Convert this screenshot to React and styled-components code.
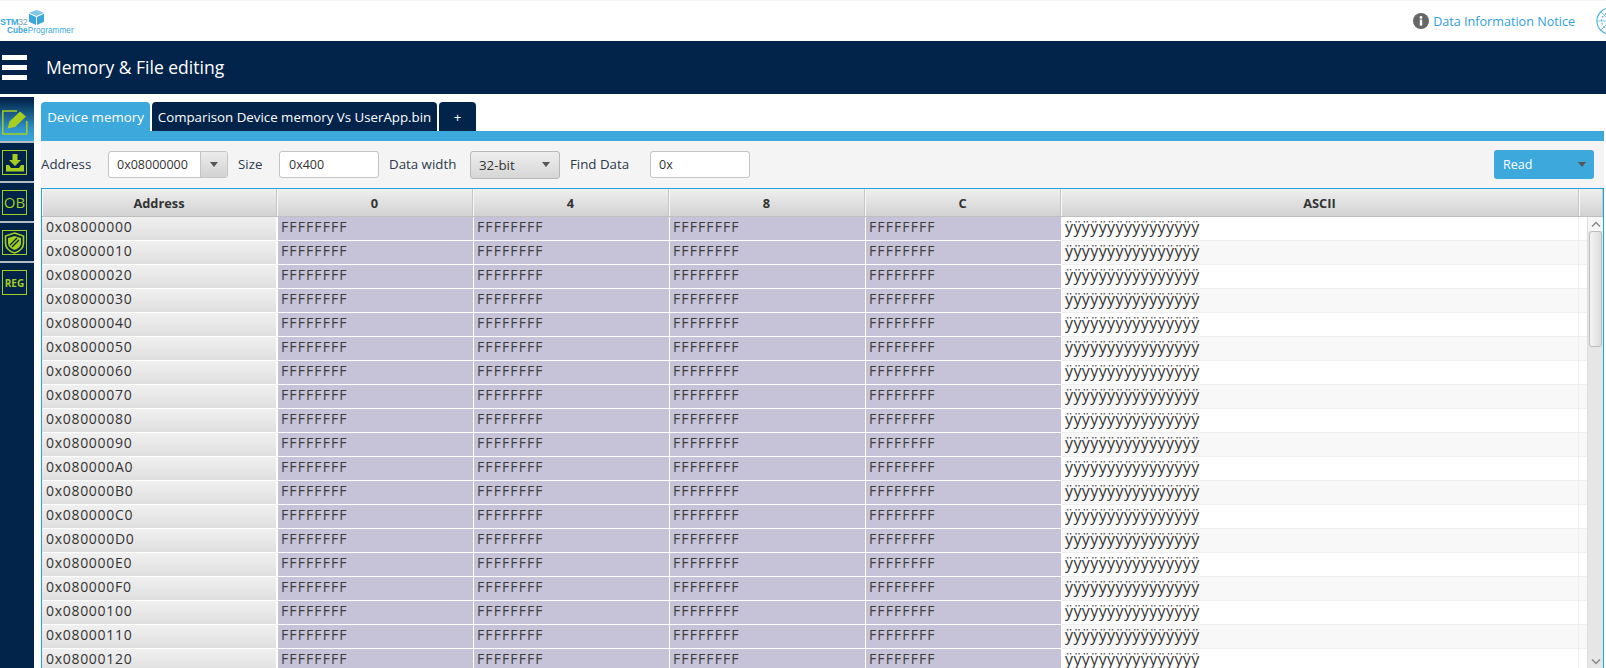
import React from "react";
import styled, { createGlobalStyle } from "styled-components";

const Global = createGlobalStyle`
  html, body { margin: 0; padding: 0; height: 668px; overflow: hidden; background: #fff; }
  body { font-family: "Open Sans", "Noto Sans", sans-serif; font-size: 13px; color: #333; }
`;

const Page = styled.div`
  width: 1606px; height: 668px; overflow: hidden; display: flex; flex-direction: column;
  border-top: 1px solid #f4f4f9; box-sizing: border-box;
`;
const TopBar = styled.header`
  height: 40px; flex: none; display: flex; align-items: center; background: #fff;
`;
const Logo = styled.div`
  width: 90px; height: 40px; flex: none; display: flex; flex-direction: column; position: relative;
  padding: 16px 0 0 0; box-sizing: border-box; line-height: 10px; font-family: "Liberation Sans", sans-serif; color: #3ba7dd;
`;
const LogoLine = styled.div`
  font-size: ${p => p.$size}px; padding-left: ${p => p.$left}px; white-space: nowrap; height: 9px; letter-spacing: ${p => p.$track || 0}px;
  b { font-weight: 700; }
  span { color: #7d9fb5; }
`;
const LogoCube = styled.svg`
  position: absolute; left: 29px; top: 9px;
`;
const Notice = styled.div`
  margin-left: auto; display: flex; align-items: center; gap: 4px; color: #2fa0dc; font-size: 12.6px;
`;
const Globe = styled.svg`
  flex: none; margin-left: 21px; margin-right: -18px;
`;
const NavBar = styled.div`
  height: 53px; flex: none; background: #02234a; display: flex; align-items: center; color: #fff;
`;
const Burger = styled.div`
  width: 25px; margin-left: 2px; display: flex; flex-direction: column; gap: 5px;
  i { display: block; height: 5px; background: #fff; }
`;
const Title = styled.div`
  margin-left: 19px; font-size: 17.5px; line-height: 24px; margin-top: -2px;
`;
const Body = styled.div`
  flex: 1; min-height: 0; display: flex; padding-top: 3px;
`;
const Side = styled.aside`
  width: 34px; flex: none; background: #02234a; display: flex; flex-direction: column;
`;
const SideItem = styled.div`
  height: ${p => p.$active ? 46 : 40}px; box-sizing: border-box; display: flex; align-items: flex-start; padding: ${p => p.$active ? 13 : 7}px 0 0 2px;
  border-bottom: ${p => p.$last ? "0" : "2px solid #b4bcc8"};
  background: ${p => p.$active ? "linear-gradient(#02234a 5%, #2f8fc4 70%, #3ca8dc)" : "transparent"};
`;
const SideBox = styled.div`
  width: 25px; height: 25px; box-sizing: border-box; border: 1px solid #a6ce1e;
  display: flex; align-items: center; justify-content: center; color: #a6ce1e; font-size: ${p => p.$size || 16}px; font-weight: ${p => p.$bold ? 700 : 400};
  line-height: 1;
`;
const Main = styled.main`
  flex: 1; min-width: 0; padding: 5px 2px 0 7px; display: flex; flex-direction: column;
`;
const Tabs = styled.div`
  display: flex; gap: 2px; height: 29px; flex: none;
`;
const Tab = styled.div`
  height: 29px; width: ${p => p.$w}px; box-sizing: border-box; display: flex; align-items: center; justify-content: center;
  background: ${p => p.$active ? "#3ca8dc" : "#02234a"}; color: #fff; border-radius: 4px 4px 0 0; font-size: 13.3px; white-space: nowrap;
`;
const TabBar = styled.div`
  height: 10px; background: #3ca8dc; flex: none;
`;
const Toolbar = styled.div`
  height: 47px; flex: none; background: #f4f4f4; display: flex; align-items: center; color: #2b3a4c;
`;
const Label = styled.span`
  font-size: 13.3px; margin-left: ${p => p.$left || 0}px; margin-top: -2px; white-space: nowrap; width: ${p => p.$w}px; flex: none;
`;
const Field = styled.div`
  height: 27px; width: ${p => p.$w}px; box-sizing: border-box; flex: none; background: #fff; border: 1px solid #c4c4c4; border-radius: 3px;
  padding-left: ${p => p.$pad || 8}px; display: flex; align-items: center; font-size: 12.5px; color: #333;
`;
const ComboArrow = styled.div`
  margin-left: auto; width: 26px; height: 100%; flex: none; background: linear-gradient(#ececec, #d2d2d2); border-left: 1px solid #c4c4c4;
  border-radius: 0 2px 2px 0; display: flex; align-items: center; justify-content: center;
`;
const Tri = styled.i`
  display: block; width: 0; height: 0; border-left: 4.5px solid transparent; border-right: 4.5px solid transparent; border-top: 5px solid #555;
`;
const Select = styled.div`
  height: 28px; width: 90px; box-sizing: border-box; flex: none; border: 1px solid #b8b8b8; border-radius: 3px;
  background: linear-gradient(#eee, #d6d6d6); display: flex; align-items: center; justify-content: space-between; padding: 0 9px 0 8px; font-size: 13.3px; color: #333;
`;
const ReadBtn = styled.div`
  margin-left: auto; margin-right: 10px; height: 29px; width: 100px; box-sizing: border-box; background: #3ca8dc; color: #fff; border-radius: 3px; display: flex;
  align-items: center; justify-content: space-between; padding: 0 8px 0 9px; font-size: 12.5px;
`;
const Table = styled.div`
  flex: 1; min-height: 0; border: 1px solid #1ea5dc; border-bottom: 0; display: flex; flex-direction: column; overflow: hidden; background: #fff;
`;
const Head = styled.div`
  display: grid; grid-template-columns: 235px 196px 196px 196px 196px 518px 1fr; height: 27px; flex: none; border-bottom: 1px solid #bfbfbf;
`;
const HeadCell = styled.div`
  background: linear-gradient(#efefef, #d2d2d2); border-right: 1px solid #c6c6c6; display: flex; align-items: center; justify-content: center; box-shadow: inset 1px 0 0 #f8f8f8;
  font-weight: 700; font-size: 12.8px; color: #333; padding-top: 1px;
`;
const Rows = styled.div`
  flex: 1; min-height: 0; display: flex;
`;
const RowList = styled.div`
  flex: 1; min-width: 0; overflow: hidden;
`;
const Row = styled.div`
  display: grid; grid-template-columns: 235px 196px 196px 196px 196px 518px 1fr; height: 24px; box-sizing: border-box; padding-bottom: 2px; background: #fff;
`;
const AddrCell = styled.div`
  background: linear-gradient(#f0f0f0, #dfdfdf); margin: 0 1px 0 0; padding: 0 0 4px 4px; display: flex; align-items: center; font-size: 14px; color: #333; letter-spacing: .7px;
`;
const DataCell = styled.div`
  background: #c6c3d8; margin-left: 1px; padding: 0 0 4px 3px; display: flex; align-items: center; font-size: 14px; color: #3b3b3b; letter-spacing: 1.1px;
`;
const AsciiCell = styled.div`
  background: ${p => p.$alt ? "#f8f8f8" : "#fff"}; box-shadow: 0 2px 0 #efefef; margin-left: 1px; padding: 0 0 4px 3px; display: flex; align-items: center; font-size: 16px; letter-spacing: .4px; color: #333; border-right: 1px solid #f0f0f0; overflow: hidden; white-space: nowrap;
`;
const Tail = styled.div`
  background: ${p => p.$alt ? "#f8f8f8" : "#fff"}; box-shadow: 0 2px 0 #efefef;
`;
const Scroll = styled.div`
  width: 16px; flex: none; background: #e6e6e6; border-left: 1px solid #ddd; box-sizing: border-box; display: flex; flex-direction: column; align-items: center;
`;
const ScrollTop = styled.div`
  height: 14px; width: 100%; background: #f6f6f6; display: flex; align-items: center; justify-content: center;
`;
const Thumb = styled.div`
  width: 13px; height: 116px; box-sizing: border-box; background: linear-gradient(90deg, #f4f4f4, #dcdcdc); border: 1px solid #bcbcbc; border-radius: 3px; flex: none;
`;
const ScrollBottom = styled.div`
  margin-top: auto; height: 12px; display: flex; align-items: center; justify-content: center;
`;

const Chevron = ({ up }) => (
  <svg width="10" height="6" viewBox="0 0 10 6" fill="none" stroke="#8a8a8a" strokeWidth="1.5">
    <path d={up ? "M1 5.5 5 1.5 9 5.5" : "M1 .5 5 4.5 9 .5"} />
  </svg>
);

const ADDRS = ["00", "10", "20", "30", "40", "50", "60", "70", "80", "90", "A0", "B0", "C0", "D0", "E0", "F0", "100", "110", "120"];
const addr = s => "0x08000" + s.padStart(3, "0");

export default function App() {
  return (
    <Page>
      <Global />
      <TopBar>
        <Logo>
          <LogoCube width="15" height="15" viewBox="0 0 16 16">
            <path d="M8 0 16 3 8 6.5 0 3Z" fill="#7fc6ea" />
            <path d="M0 4 7.500 7.500V16L0 12.500Z" fill="#3ba7dd" />
            <path d="M16 4 8.500 7.500V16L16 12.500Z" fill="#3ba7dd" />
          </LogoCube>
          <LogoLine $size={9} $left={0} $track={-0.3}><b>STM</b><span>32</span></LogoLine>
          <LogoLine $size={8.2} $left={7} $track={0.05}><b>Cube</b>Programmer</LogoLine>
        </Logo>
        <Notice>
          <svg width="16" height="16" viewBox="0 0 16 16">
            <circle cx="8" cy="8" r="8" fill="#666" />
            <rect x="6.800" y="6.600" width="2.400" height="6" fill="#fff" />
            <circle cx="8" cy="4.400" r="1.400" fill="#fff" />
          </svg>
          Data Information Notice
        </Notice>
        <Globe width="28" height="28" viewBox="0 0 30 30" fill="none" stroke="#4fb2e2" strokeWidth="1.200">
          <circle cx="15" cy="15" r="14" />
          <circle cx="15" cy="15" r="9" strokeDasharray="2 2" />
          <path d="M1 15h28M15 1v28M5 5l20 20M25 5 5 25" strokeWidth=".8" />
        </Globe>
      </TopBar>
      <NavBar>
        <Burger><i /><i /><i /></Burger>
        <Title>Memory &amp; File editing</Title>
      </NavBar>
      <Body>
        <Side>
          <SideItem $active>
            <svg width="26" height="25" viewBox="0 0 26 25" fill="none">
              <path d="M15 1H.800v23h24V11" stroke="#a6ce1e" strokeWidth="1.500" />
              <path d="M5.500 18.500 7.500 11.500 18 1.500 24 6.500 13 17Z" fill="#a6ce1e" />
            </svg>
          </SideItem>
          <SideItem>
            <SideBox>
              <svg width="20" height="20" viewBox="0 0 20 20" fill="#a6ce1e">
                <path d="M7.500 1h5v6H16l-6 6-6-6h3.500z" />
                <path d="M1 12h3l2 3h8l2-3h3v6.500H1z" />
              </svg>
            </SideBox>
          </SideItem>
          <SideItem>
            <SideBox $size={15}>OB</SideBox>
          </SideItem>
          <SideItem>
            <SideBox>
              <svg width="21" height="22" viewBox="0 0 21 22">
                <path d="M10.500 1 19.500 4V11C19.500 16 15 19.500 10.500 21 6 19.500 1.500 16 1.500 11V4Z" fill="none" stroke="#a6ce1e" strokeWidth="1.600" />
                <path d="M10.500 4 17 6V11C17 14.500 13.500 17 10.500 18 7.500 17 4 14.500 4 11V6Z" fill="#a6ce1e" />
                <path d="M6 13 13 6M8 15 15 8" stroke="#02234a" strokeWidth="1.300" />
              </svg>
            </SideBox>
          </SideItem>
          <SideItem $last>
            <SideBox $size={10} $bold>REG</SideBox>
          </SideItem>
        </Side>
        <Main>
          <Tabs>
            <Tab $active $w={109}>Device memory</Tab>
            <Tab $w={285}>Comparison Device memory Vs UserApp.bin</Tab>
            <Tab $w={37}>+</Tab>
          </Tabs>
          <TabBar />
          <Toolbar>
            <Label $w={67}>Address</Label>
            <Field $w={120}>0x08000000<ComboArrow><Tri /></ComboArrow></Field>
            <Label $left={10} $w={41}>Size</Label>
            <Field $w={100} $pad={9}>0x400</Field>
            <Label $left={10} $w={81}>Data width</Label>
            <Select>32-bit<Tri /></Select>
            <Label $left={10} $w={80}>Find Data</Label>
            <Field $w={100} $pad={8}>0x</Field>
            <ReadBtn>Read<Tri /></ReadBtn>
          </Toolbar>
          <Table>
            <Head>
              {["Address", "0", "4", "8", "C", "ASCII", ""].map((h, i) => <HeadCell key={i}>{h}</HeadCell>)}
            </Head>
            <Rows>
              <RowList>
                {ADDRS.map((a, i) => {
                  const alt = i % 2 === 1;
                  return (
                    <Row key={a}>
                      <AddrCell>{addr(a)}</AddrCell>
                      <DataCell>FFFFFFFF</DataCell>
                      <DataCell>FFFFFFFF</DataCell>
                      <DataCell>FFFFFFFF</DataCell>
                      <DataCell>FFFFFFFF</DataCell>
                      <AsciiCell $alt={alt}>ÿÿÿÿÿÿÿÿÿÿÿÿÿÿÿÿ</AsciiCell>
                      <Tail $alt={alt} />
                    </Row>
                  );
                })}
              </RowList>
              <Scroll>
                <ScrollTop><Chevron up /></ScrollTop>
                <Thumb />
                <ScrollBottom><Chevron /></ScrollBottom>
              </Scroll>
            </Rows>
          </Table>
        </Main>
      </Body>
    </Page>
  );
}
